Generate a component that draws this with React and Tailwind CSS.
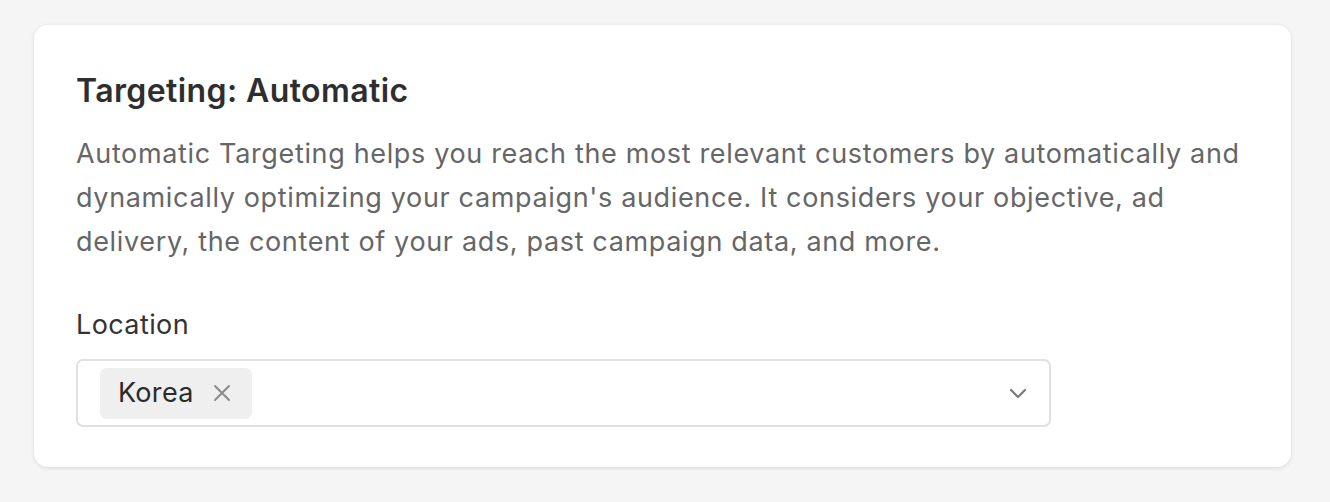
import React from "react";

function App() {
  return (
    <div
      className="min-h-[502px] w-full bg-[#f5f5f5] px-[34px] pt-[25px] pb-[35px]"
      style={{ fontFamily: "Inter, 'Noto Sans', sans-serif" }}
    >
      <div className="w-[1257px] rounded-[14px] bg-white px-[42px] pt-[46px] pb-[40px] shadow-[0_1px_4px_rgba(0,0,0,0.12)]">
        <h2 className="text-[32px] font-semibold leading-[40px] tracking-[0.4px] text-[#2e2e2e]">
          Targeting: Automatic
        </h2>
        <p className="mt-[21px] text-[27px] leading-[44px] tracking-[0.65px] text-[#666666]">
          Automatic Targeting helps you reach the most relevant customers by automatically and
          dynamically optimizing your campaign's audience. It considers your objective, ad
          delivery, the content of your ads, past campaign data, and more.
        </p>
        <div className="mt-[43px] text-[27px] leading-[36px] tracking-[0.4px] text-[#333333]">Location</div>
        <div className="mt-[16px] flex h-[68px] w-[975px] items-center justify-between rounded-[7px] border-2 border-[#e0e0e0] pl-[22px] pr-[22px]">
          <div className="flex h-[51px] items-center gap-[19px] rounded-[7px] bg-[#efefef] pl-[18px] pr-[21px]">
            <span className="text-[27px] tracking-[0.3px] text-[#2b2b2b]">Korea</span>
            <svg width="18" height="18" viewBox="0 0 18 18" fill="none" stroke="#8a8a8a" strokeWidth="2" strokeLinecap="round">
              <path d="M2 2L16 16M16 2L2 16" />
            </svg>
          </div>
          <svg width="18" height="11" viewBox="0 0 18 11" fill="none" stroke="#7a7a7a" strokeWidth="2.2" strokeLinecap="round" strokeLinejoin="round">
            <path d="M2 2L9 9L16 2" />
          </svg>
        </div>
      </div>
    </div>
  );
}

export default App;
